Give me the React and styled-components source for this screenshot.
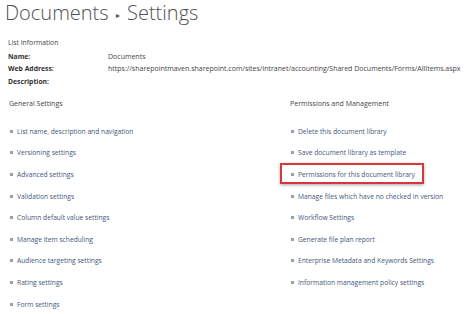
import React from 'react'
import styled, { createGlobalStyle } from 'styled-components'

const Global = createGlobalStyle`
  body {
    margin: 0;
    background: #fff;
    font-family: "Open Sans", "Noto Sans", sans-serif;
  }
`

const general = [
  'List name, description and navigation',
  'Versioning settings',
  'Advanced settings',
  'Validation settings',
  'Column default value settings',
  'Manage item scheduling',
  'Audience targeting settings',
  'Rating settings',
  'Form settings',
]

const permissions = [
  'Delete this document library',
  'Save document library as template',
  'Permissions for this document library',
  'Manage files which have no checked in version',
  'Workflow Settings',
  'Generate file plan report',
  'Enterprise Metadata and Keywords Settings',
  'Information management policy settings',
]

const App = () => {
  return (
    <Page>
      <Global />
      <Title>
        Documents <Arrow>▸</Arrow> Settings
      </Title>
      <Info>
        <Caption>List Information</Caption>
        <InfoGrid>
          <Label>Name:</Label>
          <Value>Documents</Value>
          <Label>Web Address:</Label>
          <Value>https://sharepointmaven.sharepoint.com/sites/intranet/accounting/Shared Documents/Forms/AllItems.aspx</Value>
          <Label>Description:</Label>
          <Value />
        </InfoGrid>
      </Info>
      <Columns>
        <Column>
          <Heading>General Settings</Heading>
          <List>
            {general.map((t) => (
              <Item key={t}>
                <Bullet />
                {t}
              </Item>
            ))}
          </List>
        </Column>
        <Column>
          <Heading>Permissions and Management</Heading>
          <List>
            {permissions.map((t, i) => (
              <Item key={t} $marked={i === 2}>
                <Bullet />
                {t}
              </Item>
            ))}
          </List>
        </Column>
      </Columns>
    </Page>
  )
}

const Page = styled.div`
  width: 474px;
  height: 314px;
  overflow: hidden;
  color: #444;
`

const Title = styled.h1`
  margin: 0;
  padding: 0 0 0 5px;
  height: 36px;
  font-family: "Open Sans", sans-serif;
  font-weight: 300;
  font-size: 20px;
  line-height: 26px;
  color: #505050;
  white-space: nowrap;
`

const Arrow = styled.span`
  font-size: 8px;
  vertical-align: 2px;
  margin: 0 2px;
  color: #555;
`

const Info = styled.div`
  padding-left: 8px;
  font-size: 6.8px;
`

const Caption = styled.div`
  height: 14px;
  line-height: 14px;
`

const InfoGrid = styled.div`
  display: grid;
  grid-template-columns: 100px 1fr;
  grid-auto-rows: 12.5px;
  align-items: center;
  white-space: nowrap;
`

const Label = styled.div`
  font-weight: 700;
  color: #333;
`

const Value = styled.div`
  font-size: 7px;
  color: #444;
`

const Columns = styled.div`
  display: grid;
  grid-template-columns: 281px 1fr;
  padding: 10px 0 0 9px;
`

const Column = styled.div`
  display: flex;
  flex-direction: column;
`

const Heading = styled.div`
  font-size: 7px;
  color: #444;
  height: 23px;
  line-height: 12px;
`

const List = styled.ul`
  list-style: none;
  margin: 0;
  padding: 0;
  display: flex;
  flex-direction: column;
`

const Item = styled.li`
  position: relative;
  display: flex;
  align-items: center;
  gap: 4px;
  height: 21.6px;
  padding-left: 1px;
  font-size: 6.7px;
  color: #44577a;
  white-space: nowrap;
  ${(p) =>
    p.$marked &&
    `
    &::after {
      content: "";
      position: absolute;
      left: -10px;
      top: -1px;
      width: 140px;
      height: 17px;
      border: 2px solid #d8363e;
      box-shadow: 0 1px 3px rgba(0,0,0,0.35);
    }
  `}
`

const Bullet = styled.span`
  width: 3px;
  height: 3px;
  background: #9aa0a8;
  flex: none;
`

export default App
